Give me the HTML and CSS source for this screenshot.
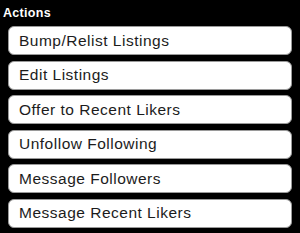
FILE: index.html
```html
<!DOCTYPE html>
<html lang="en">
<head>
  <meta charset="UTF-8">
  <meta name="viewport" content="width=device-width, initial-scale=1.0">
  <title>Actions</title>
  <link rel="stylesheet" href="styles.css">
</head>
<body>
  <div class="panel">
    <h2 class="panel-title">Actions</h2>
    <div class="actions">
      <button class="action-btn">Bump/Relist Listings</button>
      <button class="action-btn">Edit Listings</button>
      <button class="action-btn">Offer to Recent Likers</button>
      <button class="action-btn">Unfollow Following</button>
      <button class="action-btn">Message Followers</button>
      <button class="action-btn">Message Recent Likers</button>
    </div>
  </div>
</body>
</html>
```

FILE: styles.css
```css
* { box-sizing: border-box; }
body {
  margin: 0;
  background: #000;
  font-family: "Liberation Sans", Arial, sans-serif;
}
.panel {
  padding: 6px 8px 0 8px;
}
.panel-title {
  margin: 0 0 0 -5px;
  color: #fff;
  font-size: 12.5px;
  font-weight: bold;
  letter-spacing: 0.3px;
  line-height: 15px;
}
.actions {
  display: flex;
  flex-direction: column;
  gap: 5.6px;
  margin-top: 5px;
}
.action-btn {
  display: block;
  width: 100%;
  height: 29px;
  padding: 0 10px;
  background: #fff;
  border: 1px solid #9a9a9a;
  border-radius: 6px;
  color: #1c1c1c;
  font-family: inherit;
  font-size: 15.5px;
  letter-spacing: 0.5px;
  text-align: left;
  cursor: pointer;
}
```
